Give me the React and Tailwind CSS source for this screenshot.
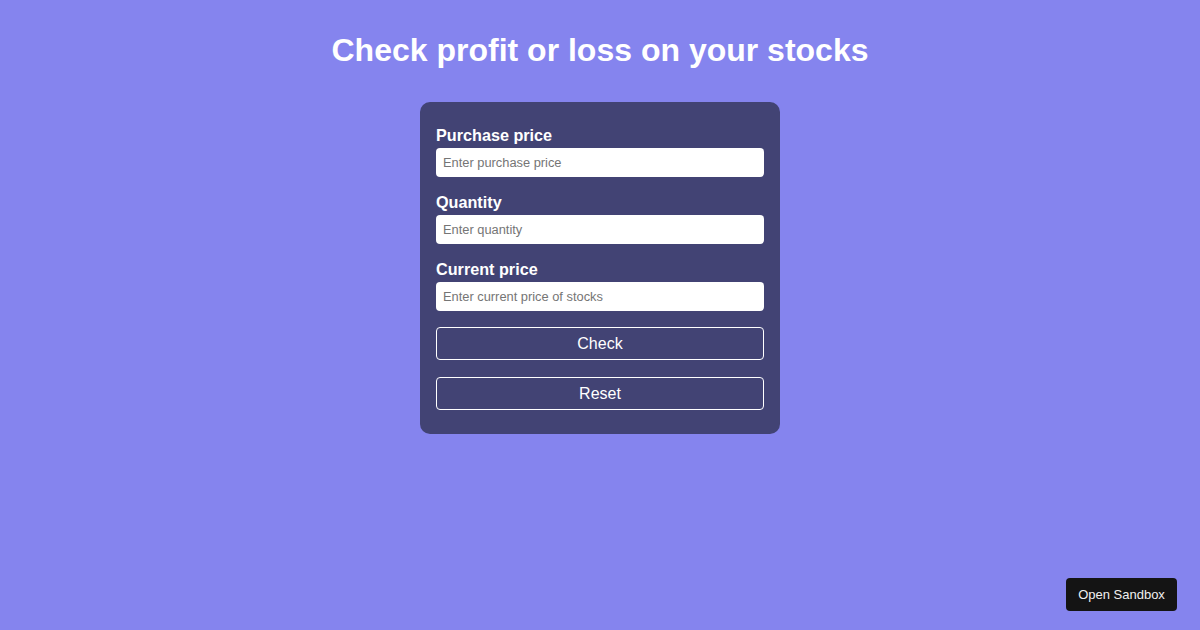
import React from "react";

export default function App() {
  const fields = [
    { label: "Purchase price", ph: "Enter purchase price" },
    { label: "Quantity", ph: "Enter quantity" },
    { label: "Current price", ph: "Enter current price of stocks" },
  ];
  return (
    <div className="min-h-[630px] w-full bg-[#8584ee] font-['Liberation_Sans',Arial,sans-serif] flex flex-col items-center pt-8 relative">
      <h1 className="text-[32px] font-bold text-white leading-[37px] mb-[33px]">
        Check profit or loss on your stocks
      </h1>
      <div className="w-[360px] bg-[#424374] rounded-[10px] px-4 pt-6 pb-6 flex flex-col">
        {fields.map((f, i) => (
          <div key={f.label} className={i === 0 ? "flex flex-col" : "flex flex-col mt-4"}>
            <label className="text-white font-bold text-[16.2px] leading-[19px] mb-[3px]">{f.label}</label>
            <input
              placeholder={f.ph}
              className="h-[29px] w-full bg-white rounded-[4px] px-[7px] text-[12.85px] text-black placeholder:text-[#757575] outline-none"
            />
          </div>
        ))}
        <button className="mt-4 h-[33px] w-full border border-white rounded-[4px] text-white text-[16px]">
          Check
        </button>
        <button className="mt-[17px] h-[33px] w-full border border-white rounded-[4px] text-white text-[16px]">
          Reset
        </button>
      </div>
      <button className="absolute right-[23px] bottom-[19px] w-[111px] h-[33px] bg-[#141414] rounded-[4px] text-[#f0f0f0] text-[13px]">
        Open Sandbox
      </button>
    </div>
  );
}
